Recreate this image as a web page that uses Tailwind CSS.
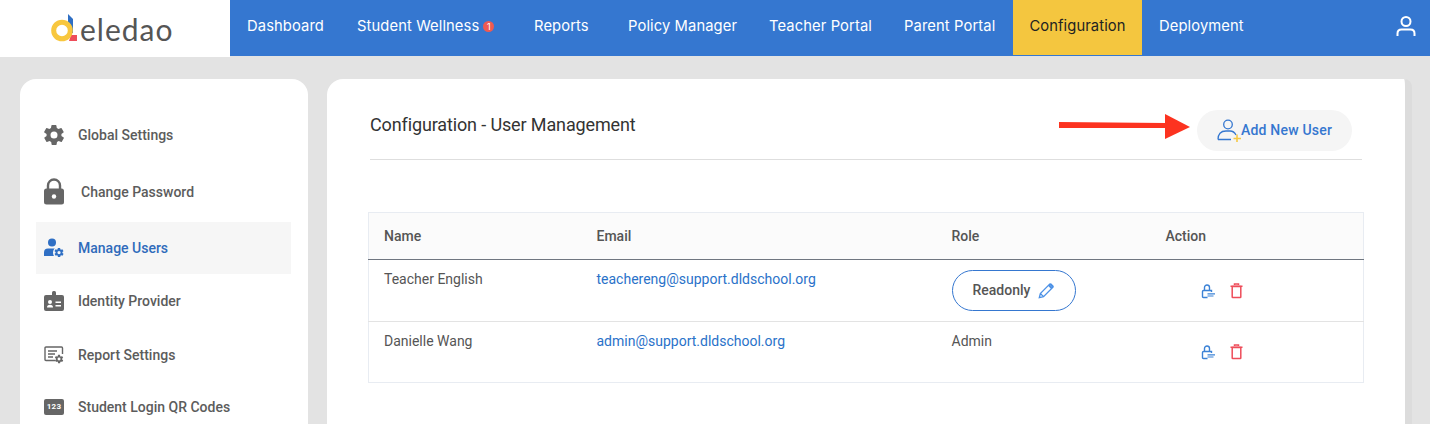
<!DOCTYPE html>
<html>
<head>
<meta charset="utf-8">
<title>Eledao - User Management</title>
<script src="https://cdn.jsdelivr.net/npm/@tailwindcss/browser@4"></script>
</head>
<body class="bg-[#e3e3e3] h-[424px] overflow-hidden font-['Roboto',sans-serif]">

<!-- top bar -->
<header class="flex h-14 bg-[#3577d0]">
    <div class="w-[230px] h-[57px] bg-white flex items-center pl-[51px] shrink-0">
        <svg width="27" height="28" viewBox="0 0 27 28" class="shrink-0 -mt-[2px]">
            <path d="M17 0 L22 5 V19 H17 Z" fill="#2f6fc4" />
            <path d="M20 21 H26 V27 H18 Z" fill="#ee4d5a" />
            <circle cx="11" cy="16.5" r="8.3" fill="none" stroke="#f8c73e" stroke-width="5" />
        </svg>
        <span class="font-['Lato',sans-serif] text-[30px] leading-none text-[#555555] tracking-[1px] ml-[2px]">eledao</span>
    </div>
    <nav class="flex flex-1 text-[14.75px] text-white font-['Inter',sans-serif] tracking-[0.1px]">
        <a class="h-full flex items-center pb-1 pl-[17px] w-[110px]">Dashboard</a>
        <a class="h-full flex items-center pb-1 pl-[17px] w-[177px]">Student Wellness
            <span class="ml-1 w-[11px] h-[11px] rounded-full bg-[#ee5a52] text-[9px] leading-[11px] text-center">1</span>
        </a>
        <a class="h-full flex items-center pb-1 pl-[17px] w-[94px]">Reports</a>
        <a class="h-full flex items-center pb-1 pl-[17px] w-[141px]">Policy Manager</a>
        <a class="h-full flex items-center pb-1 pl-[17px] w-[135px]">Teacher Portal</a>
        <a class="h-full flex items-center pb-1 pl-[17px] w-[126px]">Parent Portal</a>
        <a class="h-[55px] flex items-center justify-center pb-[3px] w-[129px] bg-[#f4c63f] text-[#222222]">Configuration</a>
        <a class="h-full flex items-center pb-1 pl-[17px] flex-1">Deployment</a>
        <a class="h-full flex items-center pb-1 pr-[13px]">
            <svg width="22" height="24" viewBox="0 0 22 24" fill="none" stroke="white" stroke-width="2">
                <circle cx="11" cy="7.5" r="4.5" />
                <path d="M2.5 22 V19.5 Q2.5 15.5 6.5 15.5 H15.5 Q19.5 15.5 19.5 19.5 V22" />
            </svg>
        </a>
    </nav>
</header>

<main class="flex items-start pl-5 pt-[23px] gap-[19px]">
    <!-- side menu -->
    <aside class="w-[288px] h-[400px] bg-white rounded-2xl pl-4 pr-[17px] pt-[28px] shrink-0 text-[14px] font-medium text-[#5c5c5c]">
        <a class="flex items-center h-14 pl-[6px] gap-[12px]">
            <svg width="24" height="24" viewBox="0 0 24 24" fill="#666666"><path d="M19.4 13a7.6 7.6 0 0 0 0-2l2.1-1.6a.5.5 0 0 0 .1-.7l-2-3.4a.5.5 0 0 0-.6-.2l-2.5 1a7.3 7.3 0 0 0-1.7-1l-.4-2.7a.5.5 0 0 0-.5-.4h-4a.5.5 0 0 0-.5.4l-.4 2.7a7.3 7.3 0 0 0-1.7 1l-2.5-1a.5.5 0 0 0-.6.2l-2 3.4a.5.5 0 0 0 .1.7L4.6 11a7.6 7.6 0 0 0 0 2l-2.1 1.6a.5.5 0 0 0-.1.7l2 3.4a.5.5 0 0 0 .6.2l2.5-1a7.3 7.3 0 0 0 1.7 1l.4 2.7a.5.5 0 0 0 .5.4h4a.5.5 0 0 0 .5-.4l.4-2.7a7.3 7.3 0 0 0 1.7-1l2.5 1a.5.5 0 0 0 .6-.2l2-3.4a.5.5 0 0 0-.1-.7zM12 15.5a3.5 3.5 0 1 1 0-7 3.5 3.5 0 0 1 0 7z"/></svg>
            <span>Global Settings</span>
        </a>
        <a class="flex items-center h-[59px] pl-2 gap-[17px]">
            <svg width="20" height="27" viewBox="0 0 20 27" class="-mt-[3px]"><path d="M4 12 V7.5 a6 6 0 0 1 12 0 V12" fill="none" stroke="#666666" stroke-width="2.4"/><rect y="10.5" width="20" height="16" rx="2.5" fill="#666666"/><circle cx="10" cy="18.5" r="2.2" fill="white"/></svg>
            <span>Change Password</span>
        </a>
        <a class="flex items-center h-[52px] pl-2 gap-[14px] bg-[#f6f6f6] text-[#2f6bbb]">
            <svg width="20" height="20" viewBox="0 0 20 20" fill="#2f6fc4">
                <circle cx="8" cy="4.5" r="4"/>
                <path d="M0 18 V14.5 Q0 10.5 4 10.5 H11 Q9 13 10 18 Z"/>
                <circle cx="15" cy="14.5" r="6" fill="#f6f6f6"/>
                <path transform="translate(9.5 9) scale(0.46)" d="M19.4 13a7.6 7.6 0 0 0 0-2l2.1-1.6a.5.5 0 0 0 .1-.7l-2-3.4a.5.5 0 0 0-.6-.2l-2.5 1a7.3 7.3 0 0 0-1.7-1l-.4-2.7a.5.5 0 0 0-.5-.4h-4a.5.5 0 0 0-.5.4l-.4 2.7a7.3 7.3 0 0 0-1.7 1l-2.5-1a.5.5 0 0 0-.6.2l-2 3.4a.5.5 0 0 0 .1.7L4.6 11a7.6 7.6 0 0 0 0 2l-2.1 1.6a.5.5 0 0 0-.1.7l2 3.4a.5.5 0 0 0 .6.2l2.5-1a7.3 7.3 0 0 0 1.7 1l.4 2.7a.5.5 0 0 0 .5.4h4a.5.5 0 0 0 .5-.4l.4-2.7a7.3 7.3 0 0 0 1.7-1l2.5 1a.5.5 0 0 0 .6-.2l2-3.4a.5.5 0 0 0-.1-.7zM12 15.5a3.5 3.5 0 1 1 0-7 3.5 3.5 0 0 1 0 7z"/>
            </svg>
            <span>Manage Users</span>
        </a>
        <a class="flex items-center h-[54px] pl-2 gap-[14px]">
            <svg width="20" height="20" viewBox="0 0 20 20"><rect y="4" width="20" height="16" rx="2" fill="#666666"/><rect x="8" y="0" width="4" height="8" rx="1.5" fill="#666666"/><circle cx="6" cy="11" r="2" fill="white"/><path d="M3 16.5 Q3 13.8 6 13.8 Q9 13.8 9 16.5 Z M11.5 10.5 H17 V12 H11.5 Z M11.5 14 H17 V15.5 H11.5 Z" fill="white"/></svg>
            <span>Identity Provider</span>
        </a>
        <a class="flex items-center h-[54px] pl-2 gap-[14px]">
            <svg width="20" height="18" viewBox="0 0 20 18" fill="none" stroke="#666666"><path d="M11 14.5 H2 Q1 14.5 1 13.5 V2 Q1 1 2 1 H17.5 Q18.5 1 18.5 2 V8" stroke-width="1.4"/><path d="M4 5 H13 M4 8 H11 M4 11 H9" stroke-width="1.4"/><path fill="#666666" stroke="none" transform="translate(10 8) scale(0.42)" d="M19.4 13a7.6 7.6 0 0 0 0-2l2.1-1.6a.5.5 0 0 0 .1-.7l-2-3.4a.5.5 0 0 0-.6-.2l-2.5 1a7.3 7.3 0 0 0-1.7-1l-.4-2.7a.5.5 0 0 0-.5-.4h-4a.5.5 0 0 0-.5.4l-.4 2.7a7.3 7.3 0 0 0-1.7 1l-2.5-1a.5.5 0 0 0-.6.2l-2 3.4a.5.5 0 0 0 .1.7L4.6 11a7.6 7.6 0 0 0 0 2l-2.1 1.6a.5.5 0 0 0-.1.7l2 3.4a.5.5 0 0 0 .6.2l2.5-1a7.3 7.3 0 0 0 1.7 1l.4 2.7a.5.5 0 0 0 .5.4h4a.5.5 0 0 0 .5-.4l.4-2.7a7.3 7.3 0 0 0 1.7-1l2.5 1a.5.5 0 0 0 .6-.2l2-3.4a.5.5 0 0 0-.1-.7zM12 15.5a3.5 3.5 0 1 1 0-7 3.5 3.5 0 0 1 0 7z"/></svg>
            <span>Report Settings</span>
        </a>
        <a class="flex items-center h-[50px] pl-2 gap-[14px]">
            <span class="w-5 h-[16px] rounded-[2px] bg-[#666666] text-white text-[8px] font-bold leading-[16px] text-center tracking-[0.3px]">123</span>
            <span>Student Login QR Codes</span>
        </a>
    </aside>

    <!-- content card -->
    <section class="w-[1085px] h-[400px] shrink-0 bg-white rounded-tl-2xl rounded-tr-lg border-r-[7px] border-[#dcdcdc] pt-[31px] pl-[41px] pr-[36px] text-[14px] text-[#555555]">
        <div class="flex items-center justify-between h-[50px] ml-[2px] border-b border-[#dedede] pb-[9px] w-[992px]">
            <h1 class="text-[18px] text-[#333333] tracking-[-0.13px] -mt-[11px]">Configuration - User Management</h1>
            <div class="flex items-center mr-[10px]">
                <svg width="131" height="26" viewBox="0 0 131 26" class="mr-[7px] -mt-[7px]"><path d="M0 8 L106 9 V14 L0 14 Z" fill="#fc3320" /><path d="M106 0 L131 13 L106 25 Z" fill="#fc3320"/></svg>
                <button class="flex items-center h-[41px] w-[155px] bg-[#f5f5f5] rounded-full pl-[20px] text-[#3577d0] font-medium tracking-[0.2px]">
                    <svg width="25" height="24" viewBox="0 0 25 24" fill="none" class="-mr-[1px]"><circle cx="11" cy="6.5" r="4.3" stroke="#3577d0" stroke-width="1.3"/><path d="M1 21.5 Q1 13 9 13 H13 Q17 13 19 17 M1 21.5 H14" stroke="#3577d0" stroke-width="1.3"/><path d="M20 16.5 V24 M16.5 20.5 H24" stroke="#f6c945" stroke-width="1.6"/></svg>
                    <span>Add New User</span>
                </button>
            </div>
        </div>

        <table class="mt-[52px] w-[996px] border border-[#e8ecf2] table-fixed border-collapse text-left">
            <thead class="bg-[#fbfbfb]">
                <tr class="h-[47px] border-b border-[#6f7680]">
                    <th class="w-[213px] pl-[15px] font-medium">Name</th>
                    <th class="w-[355px] pl-[15px] font-medium">Email</th>
                    <th class="w-[213px] pl-[15px] font-medium">Role</th>
                    <th class="pl-[16px] font-medium">Action</th>
                </tr>
            </thead>
            <tbody>
                <tr class="h-[62px] border-b border-[#e3e3e3] align-top">
                    <td class="pl-[15px] pt-[9px]">Teacher English</td>
                    <td class="pl-[15px] pt-[9px] text-[#2a72c9]">teachereng@support.dldschool.org</td>
                    <td class="pl-[15px] pt-[10px]">
                        <button class="flex items-center gap-[8px] w-[124px] h-[41px] pl-[20px] border border-[#3577d0] rounded-full font-medium">
                            Readonly
                            <svg width="17" height="17" viewBox="0 0 16 16" fill="none" stroke="#4b90e6" stroke-width="1.2"><path d="M1.2 14.8 L2.2 10.8 L11 2 L14 5 L5.2 13.8 Z M2.2 10.8 L5.2 13.8"/><path d="M11.5 1.5 L14.5 4.5 M10 3 L13 6" stroke-width="1.6"/></svg>
                        </button>
                    </td>
                    <td class="align-middle pl-[51px]">
                        <div class="flex items-center gap-[13px] mt-[1px]">
                            <svg width="15" height="15" viewBox="0 0 15 15" fill="none" stroke="#3b82d6" stroke-width="1.4"><path d="M3.5 6.5 V3.5 a2.5 2.5 0 0 1 5 0 V6.5"/><path d="M6.5 13.5 H2.5 Q1.5 13.5 1.5 12.5 V7.5 Q1.5 6.5 2.5 6.5 H10.5 V8"/><path d="M6.5 9.8 H14 M6.5 12 H12.5" stroke-width="1.2"/></svg>
                            <svg width="15" height="16" viewBox="0 0 15 16" fill="none" stroke="#ee4d5a" stroke-width="1.5"><path d="M1.5 3.2 H13.5 M5.5 2 V1 H9.5 V2"/><rect x="3.2" y="3.5" width="8.6" height="11" rx="0.6"/></svg>
                        </div>
                    </td>
                </tr>
                <tr class="h-[61px] align-top">
                    <td class="pl-[15px] pt-[9px]">Danielle Wang</td>
                    <td class="pl-[15px] pt-[9px] text-[#2a72c9]">admin@support.dldschool.org</td>
                    <td class="pl-[15px] pt-[9px]">Admin</td>
                    <td class="align-middle pl-[51px]">
                        <div class="flex items-center gap-[13px]">
                            <svg width="15" height="15" viewBox="0 0 15 15" fill="none" stroke="#3b82d6" stroke-width="1.4"><path d="M3.5 6.5 V3.5 a2.5 2.5 0 0 1 5 0 V6.5"/><path d="M6.5 13.5 H2.5 Q1.5 13.5 1.5 12.5 V7.5 Q1.5 6.5 2.5 6.5 H10.5 V8"/><path d="M6.5 9.8 H14 M6.5 12 H12.5" stroke-width="1.2"/></svg>
                            <svg width="15" height="16" viewBox="0 0 15 16" fill="none" stroke="#ee4d5a" stroke-width="1.5"><path d="M1.5 3.2 H13.5 M5.5 2 V1 H9.5 V2"/><rect x="3.2" y="3.5" width="8.6" height="11" rx="0.6"/></svg>
                        </div>
                    </td>
                </tr>
            </tbody>
        </table>
    </section>
</main>
</body>
</html>
